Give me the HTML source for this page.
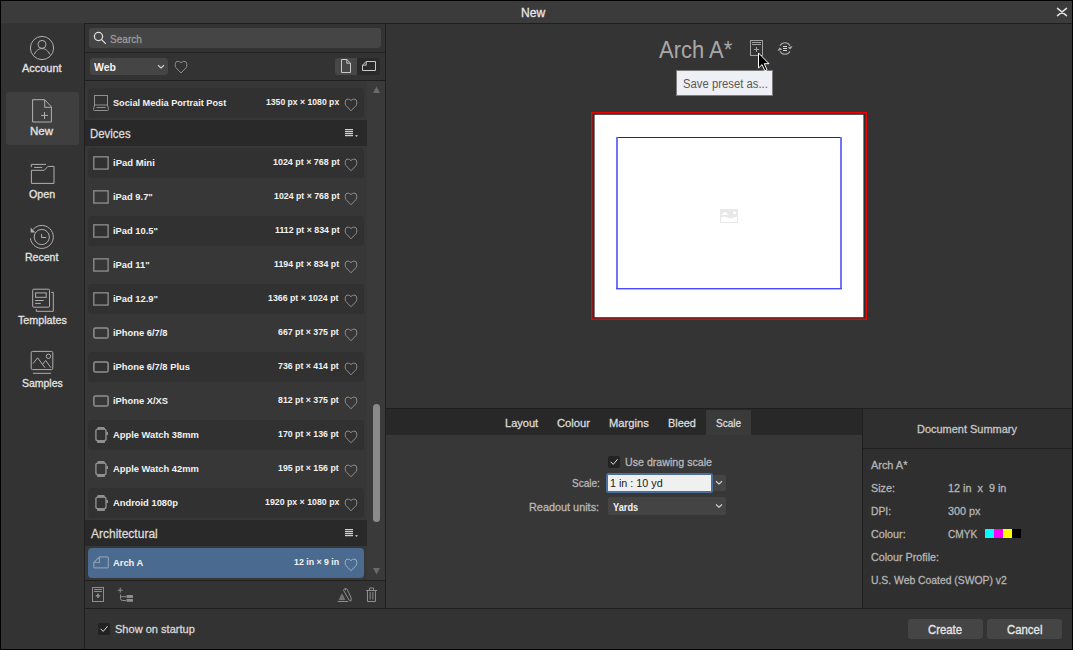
<!DOCTYPE html>
<html><head><meta charset="utf-8"><style>
html,body{margin:0;padding:0;width:1073px;height:650px;overflow:hidden;background:#000}
div{position:absolute}
.t{font-family:"Liberation Sans",sans-serif;white-space:pre;transform-origin:0 0}
svg{position:absolute;left:0;top:0}
</style></head><body>
<div style="left:0px;top:0px;width:1073px;height:650px;background:#000;"></div>
<div style="left:1px;top:1px;width:1071px;height:648px;background:#333333;"></div>
<div style="left:1px;top:1px;width:1071px;height:22px;background:#3b3b3b;"></div>
<div style="left:84px;top:23px;width:988px;height:1px;background:#1f1f1f;"></div>
<div style="left:1px;top:23px;width:83px;height:626px;background:#333333;"></div>
<div style="left:84px;top:24px;width:1px;height:625px;background:#1f1f1f;"></div>
<div style="left:6px;top:92px;width:73px;height:53px;background:#3f3f3f;border-radius:3px"></div>
<div style="left:85px;top:24px;width:300px;height:584px;background:#333333;"></div>
<div style="left:385px;top:24px;width:1px;height:584px;background:#1f1f1f;"></div>
<div style="left:89px;top:28px;width:292px;height:20px;background:#454545;border-radius:3px"></div>
<div style="left:85px;top:52px;width:300px;height:1px;background:#1f1f1f;"></div>
<div style="left:90px;top:58px;width:78px;height:17px;background:#454545;border-radius:3px"></div>
<div style="left:335px;top:58px;width:22px;height:17px;background:#474747;border-radius:3px 0 0 3px"></div>
<div style="left:357px;top:58px;width:23px;height:17px;background:#2a2a2a;border-radius:0 3px 3px 0"></div>
<div style="left:85px;top:80px;width:300px;height:1px;background:#1f1f1f;"></div>
<div style="left:85px;top:81px;width:282px;height:499px;background:#373737;"></div>
<div style="left:367px;top:81px;width:18px;height:499px;background:#3a3a3a;"></div>
<div style="left:373px;top:404px;width:7px;height:118px;background:#8a8a8a;border-radius:3.5px"></div>
<div style="left:85px;top:580px;width:300px;height:1px;background:#1f1f1f;"></div>
<div style="left:85px;top:581px;width:300px;height:27px;background:#333333;"></div>
<div style="left:88px;top:88px;width:276px;height:30px;background:#313131;border-radius:4px"></div>
<div style="left:85px;top:120px;width:282px;height:26px;background:#292929;"></div>
<div style="left:88px;top:148px;width:276px;height:30px;background:#313131;border-radius:4px"></div>
<div style="left:88px;top:216px;width:276px;height:30px;background:#313131;border-radius:4px"></div>
<div style="left:88px;top:284px;width:276px;height:30px;background:#313131;border-radius:4px"></div>
<div style="left:88px;top:352px;width:276px;height:30px;background:#313131;border-radius:4px"></div>
<div style="left:88px;top:420px;width:276px;height:30px;background:#313131;border-radius:4px"></div>
<div style="left:88px;top:488px;width:276px;height:30px;background:#313131;border-radius:4px"></div>
<div style="left:85px;top:520px;width:282px;height:26px;background:#292929;"></div>
<div style="left:88px;top:548px;width:276px;height:30px;background:#4b6a8f;border-radius:4px"></div>
<div style="left:386px;top:24px;width:686px;height:384px;background:#343434;"></div>
<div style="left:386px;top:408px;width:686px;height:1px;background:#1f1f1f;"></div>
<div style="left:676px;top:70px;width:97px;height:26px;background:#7c7c7c;"></div>
<div style="left:677px;top:71px;width:95px;height:24px;background:#eff0f6;"></div>
<div style="left:386px;top:409px;width:476px;height:26px;background:#282828;"></div>
<div style="left:706px;top:410px;width:45px;height:25px;background:#3a3a3a;"></div>
<div style="left:386px;top:435px;width:476px;height:173px;background:#373737;"></div>
<div style="left:862px;top:409px;width:1px;height:199px;background:#1f1f1f;"></div>
<div style="left:608px;top:456px;width:12px;height:12px;background:#222222;border-radius:2px"></div>
<div style="left:606px;top:473px;width:107px;height:20px;background:#4b6f9c;border-radius:2.5px"></div>
<div style="left:608px;top:475px;width:103px;height:16px;background:#f0f0f0;"></div>
<div style="left:713px;top:475px;width:13px;height:16px;background:#444444;border-radius:0 2px 2px 0"></div>
<div style="left:608px;top:497px;width:118px;height:18px;background:#444444;border-radius:2px"></div>
<div style="left:863px;top:409px;width:209px;height:199px;background:#2f2f2f;"></div>
<div style="left:863px;top:448px;width:209px;height:1px;background:#1f1f1f;"></div>
<div style="left:985px;top:529px;width:9px;height:9px;background:#00ffff;"></div>
<div style="left:994px;top:529px;width:9px;height:9px;background:#ff00ff;"></div>
<div style="left:1003px;top:529px;width:9px;height:9px;background:#ffff00;"></div>
<div style="left:1012px;top:529px;width:9px;height:9px;background:#000000;"></div>
<div style="left:85px;top:608px;width:987px;height:1px;background:#1f1f1f;"></div>
<div style="left:85px;top:609px;width:987px;height:40px;background:#333333;"></div>
<div style="left:98px;top:623px;width:12px;height:12px;background:#222222;border-radius:2px"></div>
<div style="left:908px;top:619px;width:75px;height:20px;background:#454545;border-radius:3px"></div>
<div style="left:987px;top:619px;width:75px;height:20px;background:#454545;border-radius:3px"></div>
<svg width="1073" height="650" viewBox="0 0 1073 650">
<path d="M351 110.8 L345.8 105.39999999999999 C345 104.39999999999999 345 101.0 346 99.8 C347 98.8 349.4 98.8 351 100.6 C352.6 98.8 355 98.8 356 99.8 C357 101.0 357 104.39999999999999 356.2 105.39999999999999 Z" fill="none" stroke="#8f8f8f" stroke-width="1"/>
<g fill="none" stroke="#909090"><rect x="94.5" y="95.5" width="13" height="9.5"/><path d="M94.5 105 L93.5 109.5 Q93.5 110.5 94.5 110.5 H107.5 Q108.5 110.5 108.5 109.5 L107.5 105"/><path d="M96.5 107.5 H105.5"/></g>
<g fill="#d0d0d0"><rect x="345" y="129" width="8" height="1.2"/><rect x="345" y="131" width="8" height="1.2"/><rect x="345" y="133" width="8" height="1.2"/><rect x="345" y="135" width="8" height="1.2"/><path d="M355 135.2h3l-1.5 1.8z"/></g>
<path d="M351 170.8 L345.8 165.4 C345 164.4 345 161.0 346 159.8 C347 158.8 349.4 158.8 351 160.60000000000002 C352.6 158.8 355 158.8 356 159.8 C357 161.0 357 164.4 356.2 165.4 Z" fill="none" stroke="#8f8f8f" stroke-width="1"/>
<rect x="93.8" y="156.85" width="14.3" height="12.2" fill="none" stroke="#909090" stroke-width="1.3"/>
<path d="M351 204.8 L345.8 199.4 C345 198.4 345 195.0 346 193.8 C347 192.8 349.4 192.8 351 194.60000000000002 C352.6 192.8 355 192.8 356 193.8 C357 195.0 357 198.4 356.2 199.4 Z" fill="none" stroke="#8f8f8f" stroke-width="1"/>
<rect x="93.8" y="190.85" width="14.3" height="12.2" fill="none" stroke="#909090" stroke-width="1.3"/>
<path d="M351 238.8 L345.8 233.4 C345 232.4 345 229.0 346 227.8 C347 226.8 349.4 226.8 351 228.60000000000002 C352.6 226.8 355 226.8 356 227.8 C357 229.0 357 232.4 356.2 233.4 Z" fill="none" stroke="#8f8f8f" stroke-width="1"/>
<rect x="93.8" y="224.85" width="14.3" height="12.2" fill="none" stroke="#909090" stroke-width="1.3"/>
<path d="M351 272.8 L345.8 267.40000000000003 C345 266.40000000000003 345 263.0 346 261.8 C347 260.8 349.4 260.8 351 262.6 C352.6 260.8 355 260.8 356 261.8 C357 263.0 357 266.40000000000003 356.2 267.40000000000003 Z" fill="none" stroke="#8f8f8f" stroke-width="1"/>
<rect x="93.8" y="258.85" width="14.3" height="12.2" fill="none" stroke="#909090" stroke-width="1.3"/>
<path d="M351 306.8 L345.8 301.40000000000003 C345 300.40000000000003 345 297.0 346 295.8 C347 294.8 349.4 294.8 351 296.6 C352.6 294.8 355 294.8 356 295.8 C357 297.0 357 300.40000000000003 356.2 301.40000000000003 Z" fill="none" stroke="#8f8f8f" stroke-width="1"/>
<rect x="93.8" y="292.85" width="14.3" height="12.2" fill="none" stroke="#909090" stroke-width="1.3"/>
<path d="M351 340.8 L345.8 335.40000000000003 C345 334.40000000000003 345 331.0 346 329.8 C347 328.8 349.4 328.8 351 330.6 C352.6 328.8 355 328.8 356 329.8 C357 331.0 357 334.40000000000003 356.2 335.40000000000003 Z" fill="none" stroke="#8f8f8f" stroke-width="1"/>
<rect x="93.9" y="327.9" width="14.2" height="10.2" rx="1.6" fill="none" stroke="#909090" stroke-width="1.5"/>
<path d="M351 374.8 L345.8 369.40000000000003 C345 368.40000000000003 345 365.0 346 363.8 C347 362.8 349.4 362.8 351 364.6 C352.6 362.8 355 362.8 356 363.8 C357 365.0 357 368.40000000000003 356.2 369.40000000000003 Z" fill="none" stroke="#8f8f8f" stroke-width="1"/>
<rect x="93.9" y="361.9" width="14.2" height="10.2" rx="1.6" fill="none" stroke="#909090" stroke-width="1.5"/>
<path d="M351 408.8 L345.8 403.40000000000003 C345 402.40000000000003 345 399.0 346 397.8 C347 396.8 349.4 396.8 351 398.6 C352.6 396.8 355 396.8 356 397.8 C357 399.0 357 402.40000000000003 356.2 403.40000000000003 Z" fill="none" stroke="#8f8f8f" stroke-width="1"/>
<rect x="93.9" y="395.9" width="14.2" height="10.2" rx="1.6" fill="none" stroke="#909090" stroke-width="1.5"/>
<path d="M351 442.8 L345.8 437.40000000000003 C345 436.40000000000003 345 433.0 346 431.8 C347 430.8 349.4 430.8 351 432.6 C352.6 430.8 355 430.8 356 431.8 C357 433.0 357 436.40000000000003 356.2 437.40000000000003 Z" fill="none" stroke="#8f8f8f" stroke-width="1"/>
<g fill="#909090"><path d="M97.9 427 H104.2 L105.4 429.4 H96.7 Z"/><path d="M96.8 440.5 H105.3 L104.7 443 H97.4 Z"/><rect x="106.2" y="432" width="1.8" height="3"/></g><rect x="95.9" y="429.1" width="10.1" height="11.6" rx="2" fill="none" stroke="#909090" stroke-width="1.4"/>
<path d="M351 476.8 L345.8 471.40000000000003 C345 470.40000000000003 345 467.0 346 465.8 C347 464.8 349.4 464.8 351 466.6 C352.6 464.8 355 464.8 356 465.8 C357 467.0 357 470.40000000000003 356.2 471.40000000000003 Z" fill="none" stroke="#8f8f8f" stroke-width="1"/>
<g fill="#909090"><path d="M97.9 461 H104.2 L105.4 463.4 H96.7 Z"/><path d="M96.8 474.5 H105.3 L104.7 477 H97.4 Z"/><rect x="106.2" y="466" width="1.8" height="3"/></g><rect x="95.9" y="463.1" width="10.1" height="11.6" rx="2" fill="none" stroke="#909090" stroke-width="1.4"/>
<path d="M351 510.8 L345.8 505.40000000000003 C345 504.40000000000003 345 501.0 346 499.8 C347 498.8 349.4 498.8 351 500.6 C352.6 498.8 355 498.8 356 499.8 C357 501.0 357 504.40000000000003 356.2 505.40000000000003 Z" fill="none" stroke="#8f8f8f" stroke-width="1"/>
<g fill="#909090"><path d="M97.9 495 H104.2 L105.4 497.4 H96.7 Z"/><path d="M96.8 508.5 H105.3 L104.7 511 H97.4 Z"/><rect x="106.2" y="500" width="1.8" height="3"/></g><rect x="95.9" y="497.1" width="10.1" height="11.6" rx="2" fill="none" stroke="#909090" stroke-width="1.4"/>
<g fill="#d0d0d0"><rect x="345" y="529" width="8" height="1.2"/><rect x="345" y="531" width="8" height="1.2"/><rect x="345" y="533" width="8" height="1.2"/><rect x="345" y="535" width="8" height="1.2"/><path d="M355 535.2h3l-1.5 1.8z"/></g>
<path d="M351 570.8 L345.8 565.4 C345 564.4 345 561.0 346 559.8 C347 558.8 349.4 558.8 351 560.5999999999999 C352.6 558.8 355 558.8 356 559.8 C357 561.0 357 564.4 356.2 565.4 Z" fill="none" stroke="#9fb2c8" stroke-width="1"/>
<path d="M99.5 556.9 H107.3 Q108.3 556.9 108.3 557.9 V566.9 Q108.3 567.9 107.3 567.9 H94.8 Q93.8 567.9 93.8 566.9 V562.5 Z M93.8 562.5 H99.5 V556.9" fill="none" stroke="#8e9cae" stroke-width="1.2" stroke-linejoin="round"/>
<path d="M373 93 L376.5 86.5 L380 93 Z" fill="#6a6a6a"/><path d="M373 568 L376.5 574.5 L380 568 Z" fill="#6a6a6a"/>
<g fill="none" stroke="#8e8e8e"><rect x="92.5" y="587.5" width="11" height="14"/><path d="M94 589.5H102M94 591.5H102"/></g><path d="M98 593.5V598M95.8 595.75H100.2" stroke="#8e8e8e" stroke-width="1.6"/>
<g fill="none" stroke="#8e8e8e"><path d="M120.2 587.7V592.7M117.7 590.2H122.7"/><path d="M120.5 594.5V598.5Q120.5 600.5 122.5 600.5H126M120.5 596.7H126"/></g><g fill="#8e8e8e"><rect x="126.5" y="595" width="6.5" height="3" rx="0.5"/><rect x="126.5" y="599" width="6.5" height="2.8" rx="0.5"/></g>
<path d="M337.8 601.5H348.2" stroke="#8e8e8e" stroke-width="1"/><path d="M339.3 599.6 L342 594.2 L344.7 599.6 Z" fill="#6e6e6e" stroke="#858585" stroke-width="0.8"/><path d="M343.6 590.4 Q343.9 588.3 346 588.4 Q346.9 588.6 347.2 589.3 L351.2 598 L351 601.2 L349 600 Z" fill="none" stroke="#8e8e8e" stroke-width="1" stroke-linejoin="round"/><circle cx="345.4" cy="589.8" r="0.7" fill="#8e8e8e"/>
<g fill="none" stroke="#8e8e8e"><path d="M366 590.5H377M369.5 590.5V588H373.5V590.5"/><path d="M367.5 591V601.5H375.5V591"/></g><g fill="#7a7a7a"><rect x="369.5" y="592" width="1.3" height="7.5"/><rect x="372.2" y="592" width="1.3" height="7.5"/></g>
<g fill="none" stroke="#b0b0b0" stroke-width="1"><circle cx="42" cy="48" r="11.6"/><circle cx="42" cy="44.4" r="4"/><path d="M34.2 54.5 C36 50.3 39 48.6 42 48.6 C45 48.6 48 50.3 49.8 54.5"/></g>
<g fill="none" stroke="#b0b0b0" stroke-width="1"><path d="M32.6 99.7 H44.6 L51.4 106.8 V122 H32.6 Z"/><path d="M44.7 99.7 V107.3 H51.4"/><path d="M41 115.4 H48 M44.5 112 V119"/></g>
<g fill="none" stroke="#b0b0b0" stroke-width="1"><path d="M31.3 167.2 V164.4 H46"/><path d="M34.1 167.4 H42.2"/><path d="M31.4 170.3 H44.2 L47.9 166.4 H54 V183.4 H31.4 Z"/></g>
<g fill="none" stroke="#b0b0b0" stroke-width="1"><path d="M30.4 238.3 A11.5 11.5 0 1 0 33.2 229.3"/><circle cx="41.75" cy="237" r="7.6"/><path d="M41.6 234 V237.5 H46.2"/></g><path d="M30.6 227.6 L30.6 232.4 L35.4 232.4 Z" fill="#b0b0b0"/>
<g fill="none" stroke="#b0b0b0" stroke-width="1"><rect x="32.7" y="289.2" width="16.8" height="18" rx="1"/><rect x="35.6" y="292.9" width="10.6" height="4.4"/><path d="M35.1 300.5H43.7M35.1 303.4H40.8"/><path d="M51.1 292.4H53.3V311.3H36.3V309.1"/></g>
<g fill="none" stroke="#b0b0b0" stroke-width="1"><rect x="31.2" y="351.4" width="21.6" height="18.2" rx="1.3"/><path d="M33.1 363.5L37.6 357.8L45 367.7M42.7 364.2L45.7 360.5L50.9 367.7"/><circle cx="48.4" cy="356.3" r="2.2"/><path d="M32.9 373.3H51.1"/></g>
<g fill="none" stroke="#c8c8c8" stroke-width="1" stroke-linejoin="round"><path d="M341.5 59.5H346.8L350.5 63.2V72.5H341.5Z M346.8 59.5V63.2H350.5"/><path d="M366.2 61.5H375.5V70.5H362.5V65.2Z M362.5 65.2H366.2V61.5"/></g>
<g fill="none" stroke="#dedede" stroke-width="1.3"><circle cx="98.5" cy="36.5" r="4.1"/><path d="M101.6 39.6L105.4 43.4" stroke-linecap="round"/></g>
<path d="M158 65.3L161 68L164 65.3" fill="none" stroke="#d0d0d0" stroke-width="1.2"/>
<path d="M181 73 L175.8 67.6 C175 66.6 175 63.2 176 62 C177 61 179.4 61 181 62.8 C182.6 61 185 61 186 62 C187 63.2 187 66.6 186.2 67.6 Z" fill="none" stroke="#8f8f8f" stroke-width="1"/>
<g fill="none" stroke="#a0a0a0" stroke-width="1"><rect x="750.5" y="40.5" width="12" height="15"/><path d="M752 42.5H761M752 44.5H761M756.5 47V52M754 49.5H759"/></g>
<g fill="none" stroke="#a8a8a8" stroke-width="1.1"><path d="M780 45.6 A5.8 5.8 0 0 1 790 45.6"/><path d="M790 51.4 A5.8 5.8 0 0 1 780 51.4"/></g><path d="M783 46.5H787M783 48.5H787M783 50.5H787" stroke="#d8d8d8" stroke-width="1.1"/><path d="M787.8 47.6 L792.6 46 L790.4 49.4 Z M782.2 49.4 L777.4 51 L779.6 47.6 Z" fill="#b0b0b0"/>
<rect x="592" y="113" width="274" height="206" fill="#253030"/><rect x="594.6" y="114.8" width="268.8" height="202.4" fill="#fff"/><rect x="591.75" y="112.75" width="274.5" height="206.5" fill="none" stroke="#f00000" stroke-width="1.5"/>
<g shape-rendering="crispEdges"><rect x="616" y="137" width="226" height="1" fill="#1414ff"/><rect x="616" y="137" width="2" height="153" fill="#7272ff"/><rect x="840" y="137" width="2" height="153" fill="#7272ff"/><rect x="616" y="288" width="226" height="1" fill="#4a4aff"/><rect x="616" y="289" width="226" height="1" fill="#b4b4ff"/></g>
<g fill="#e2e2e2"><path d="M720 209H738V223H720Z" fill="#e8e8e8"/></g><g fill="#fff"><path d="M721 215 L725 211.5 L728 214.5 L730 215Z"/><circle cx="734.5" cy="212.8" r="1.5"/><path d="M721 217.2 L725 216.5 L731 218.5 L737 216.5 V222 H721Z"/></g>
<path d="M758.5 53 V68 L762 64.6 L764.8 70.8 L767 69.8 L764.3 63.7 H769 Z" fill="#000" stroke="#fff" stroke-width="1" stroke-linejoin="miter"/>
<path d="M610.6 461.8 L613.2 464.4 L617.6 459.2" fill="none" stroke="#dcdcdc" stroke-width="1"/>
<path d="M716 481.2L719 484L722 481.2" fill="none" stroke="#d0d0d0" stroke-width="1.2"/>
<path d="M716 504.5L719 507.3L722 504.5" fill="none" stroke="#d0d0d0" stroke-width="1.2"/>
<path d="M100.6 628.8 L103.2 631.4 L107.6 626.2" fill="none" stroke="#dcdcdc" stroke-width="1"/>
<path d="M1057.5 8.4 L1066.5 15.6 M1066.5 8.4 L1057.5 15.6" stroke="#e4e4e4" stroke-width="1.5" stroke-linecap="round"/>
</svg>
<div class="t" style="left:520.87px;top:6.00px;font-size:13px;line-height:13px;font-weight:400;color:#e8e8e8;transform:scaleX(0.9280);-webkit-text-stroke-width:0.3px">New</div>
<div class="t" style="left:22.00px;top:63.00px;font-size:11.5px;line-height:11.5px;font-weight:400;color:#e4e4e4;transform:scaleX(0.9524);-webkit-text-stroke-width:0.3px">Account</div>
<div class="t" style="left:30.00px;top:126.00px;font-size:11.5px;line-height:11.5px;font-weight:400;color:#e4e4e4;transform:scaleX(1.0000);-webkit-text-stroke-width:0.3px">New</div>
<div class="t" style="left:29.00px;top:189.00px;font-size:11.5px;line-height:11.5px;font-weight:400;color:#e4e4e4;transform:scaleX(0.9286);-webkit-text-stroke-width:0.3px">Open</div>
<div class="t" style="left:25.08px;top:252.00px;font-size:11.5px;line-height:11.5px;font-weight:400;color:#e4e4e4;transform:scaleX(0.9167);-webkit-text-stroke-width:0.3px">Recent</div>
<div class="t" style="left:17.50px;top:315.00px;font-size:11.5px;line-height:11.5px;font-weight:400;color:#e4e4e4;transform:scaleX(0.9327);-webkit-text-stroke-width:0.3px">Templates</div>
<div class="t" style="left:22.00px;top:378.00px;font-size:11.5px;line-height:11.5px;font-weight:400;color:#e4e4e4;transform:scaleX(0.9111);-webkit-text-stroke-width:0.3px">Samples</div>
<div class="t" style="left:110.00px;top:34.00px;font-size:11px;line-height:11px;font-weight:400;color:#9c9c9c;transform:scaleX(0.9143);-webkit-text-stroke-width:0.3px">Search</div>
<div class="t" style="left:94.00px;top:62.00px;font-size:11px;line-height:11px;font-weight:700;color:#f4f4f4;transform:scaleX(0.9565)">Web</div>
<div class="t" style="left:113.00px;top:98.00px;font-size:9.5px;line-height:9.5px;font-weight:700;color:#f2f2f2;transform:scaleX(0.9658)">Social Media Portrait Post</div>
<div class="t" style="left:265.70px;top:97.00px;font-size:9.5px;line-height:9.5px;font-weight:700;color:#f2f2f2;transform:scaleX(0.9086)">1350 px × 1080 px</div>
<div class="t" style="left:89.62px;top:127.00px;font-size:13px;line-height:13px;font-weight:400;color:#dcdcdc;transform:scaleX(0.8778);-webkit-text-stroke-width:0.3px">Devices</div>
<div class="t" style="left:113.00px;top:158.00px;font-size:9.5px;line-height:9.5px;font-weight:700;color:#f2f2f2;transform:scaleX(1.0024)">iPad Mini</div>
<div class="t" style="left:272.70px;top:157.00px;font-size:9.5px;line-height:9.5px;font-weight:700;color:#f2f2f2;transform:scaleX(0.9380)">1024 pt × 768 pt</div>
<div class="t" style="left:113.00px;top:192.00px;font-size:9.5px;line-height:9.5px;font-weight:700;color:#f2f2f2;transform:scaleX(0.9841)">iPad 9.7&quot;</div>
<div class="t" style="left:273.74px;top:191.00px;font-size:9.5px;line-height:9.5px;font-weight:700;color:#f2f2f2;transform:scaleX(0.9233)">1024 pt × 768 pt</div>
<div class="t" style="left:113.00px;top:226.00px;font-size:9.5px;line-height:9.5px;font-weight:700;color:#f2f2f2;transform:scaleX(0.9841)">iPad 10.5&quot;</div>
<div class="t" style="left:274.67px;top:225.00px;font-size:9.5px;line-height:9.5px;font-weight:700;color:#f2f2f2;transform:scaleX(0.9233)">1112 pt × 834 pt</div>
<div class="t" style="left:113.00px;top:260.00px;font-size:9.5px;line-height:9.5px;font-weight:700;color:#f2f2f2;transform:scaleX(0.9841)">iPad 11&quot;</div>
<div class="t" style="left:273.74px;top:259.00px;font-size:9.5px;line-height:9.5px;font-weight:700;color:#f2f2f2;transform:scaleX(0.9233)">1194 pt × 834 pt</div>
<div class="t" style="left:113.00px;top:294.00px;font-size:9.5px;line-height:9.5px;font-weight:700;color:#f2f2f2;transform:scaleX(0.9841)">iPad 12.9&quot;</div>
<div class="t" style="left:268.20px;top:293.00px;font-size:9.5px;line-height:9.5px;font-weight:700;color:#f2f2f2;transform:scaleX(0.9233)">1366 pt × 1024 pt</div>
<div class="t" style="left:113.00px;top:328.00px;font-size:9.5px;line-height:9.5px;font-weight:700;color:#f2f2f2;transform:scaleX(0.9841)">iPhone 6/7/8</div>
<div class="t" style="left:278.36px;top:327.00px;font-size:9.5px;line-height:9.5px;font-weight:700;color:#f2f2f2;transform:scaleX(0.9233)">667 pt × 375 pt</div>
<div class="t" style="left:113.00px;top:362.00px;font-size:9.5px;line-height:9.5px;font-weight:700;color:#f2f2f2;transform:scaleX(0.9841)">iPhone 6/7/8 Plus</div>
<div class="t" style="left:278.36px;top:361.00px;font-size:9.5px;line-height:9.5px;font-weight:700;color:#f2f2f2;transform:scaleX(0.9233)">736 pt × 414 pt</div>
<div class="t" style="left:113.00px;top:396.00px;font-size:9.5px;line-height:9.5px;font-weight:700;color:#f2f2f2;transform:scaleX(0.9841)">iPhone X/XS</div>
<div class="t" style="left:278.36px;top:395.00px;font-size:9.5px;line-height:9.5px;font-weight:700;color:#f2f2f2;transform:scaleX(0.9233)">812 pt × 375 pt</div>
<div class="t" style="left:113.00px;top:430.00px;font-size:9.5px;line-height:9.5px;font-weight:700;color:#f2f2f2;transform:scaleX(0.9841)">Apple Watch 38mm</div>
<div class="t" style="left:278.36px;top:429.00px;font-size:9.5px;line-height:9.5px;font-weight:700;color:#f2f2f2;transform:scaleX(0.9233)">170 pt × 136 pt</div>
<div class="t" style="left:113.00px;top:464.00px;font-size:9.5px;line-height:9.5px;font-weight:700;color:#f2f2f2;transform:scaleX(0.9841)">Apple Watch 42mm</div>
<div class="t" style="left:278.36px;top:463.00px;font-size:9.5px;line-height:9.5px;font-weight:700;color:#f2f2f2;transform:scaleX(0.9233)">195 pt × 156 pt</div>
<div class="t" style="left:113.00px;top:498.00px;font-size:9.5px;line-height:9.5px;font-weight:700;color:#f2f2f2;transform:scaleX(0.9841)">Android 1080p</div>
<div class="t" style="left:264.51px;top:497.00px;font-size:9.5px;line-height:9.5px;font-weight:700;color:#f2f2f2;transform:scaleX(0.9233)">1920 px × 1080 px</div>
<div class="t" style="left:90.50px;top:527.00px;font-size:13px;line-height:13px;font-weight:400;color:#dcdcdc;transform:scaleX(0.9236);-webkit-text-stroke-width:0.3px">Architectural</div>
<div class="t" style="left:113.00px;top:558.00px;font-size:9.5px;line-height:9.5px;font-weight:700;color:#f2f2f2;transform:scaleX(0.9841)">Arch A</div>
<div class="t" style="left:294.06px;top:557.00px;font-size:9.5px;line-height:9.5px;font-weight:700;color:#f2f2f2;transform:scaleX(0.9233)">12 in × 9 in</div>
<div class="t" style="left:659.00px;top:39.00px;font-size:23px;line-height:23px;font-weight:400;color:#a8a8a8;transform:scaleX(0.9545)">Arch A*</div>
<div class="t" style="left:682.90px;top:78.00px;font-size:12.5px;line-height:12.5px;font-weight:400;color:#575757;transform:scaleX(0.9043)">Save preset as...</div>
<div class="t" style="left:505.44px;top:418.00px;font-size:11.5px;line-height:11.5px;font-weight:400;color:#dcdcdc;transform:scaleX(0.9588);-webkit-text-stroke-width:0.3px">Layout</div>
<div class="t" style="left:557.40px;top:418.00px;font-size:11.5px;line-height:11.5px;font-weight:400;color:#dcdcdc;transform:scaleX(0.9765);-webkit-text-stroke-width:0.3px">Colour</div>
<div class="t" style="left:609.32px;top:418.00px;font-size:11.5px;line-height:11.5px;font-weight:400;color:#dcdcdc;transform:scaleX(0.9750);-webkit-text-stroke-width:0.3px">Margins</div>
<div class="t" style="left:668.25px;top:418.00px;font-size:11.5px;line-height:11.5px;font-weight:400;color:#dcdcdc;transform:scaleX(0.9500);-webkit-text-stroke-width:0.3px">Bleed</div>
<div class="t" style="left:715.70px;top:418.00px;font-size:11.5px;line-height:11.5px;font-weight:400;color:#dcdcdc;transform:scaleX(0.8759);-webkit-text-stroke-width:0.3px">Scale</div>
<div class="t" style="left:624.67px;top:457.00px;font-size:11.5px;line-height:11.5px;font-weight:400;color:#b8b8b8;transform:scaleX(0.9258);-webkit-text-stroke-width:0.3px">Use drawing scale</div>
<div class="t" style="left:572.00px;top:478.00px;font-size:11.5px;line-height:11.5px;font-weight:400;color:#b8b8b8;transform:scaleX(0.8710);-webkit-text-stroke-width:0.3px">Scale:</div>
<div class="t" style="left:609.56px;top:478.00px;font-size:11.5px;line-height:11.5px;font-weight:400;color:#202020;transform:scaleX(0.9364)">1 in : 10 yd</div>
<div class="t" style="left:529.05px;top:502.00px;font-size:11.5px;line-height:11.5px;font-weight:400;color:#b8b8b8;transform:scaleX(0.9452);-webkit-text-stroke-width:0.3px">Readout units:</div>
<div class="t" style="left:612.50px;top:502.00px;font-size:10.5px;line-height:10.5px;font-weight:700;color:#f2f2f2;transform:scaleX(0.8793)">Yards</div>
<div class="t" style="left:917.45px;top:424.00px;font-size:11.5px;line-height:11.5px;font-weight:400;color:#c8c8c8;transform:scaleX(0.9529);-webkit-text-stroke-width:0.3px">Document Summary</div>
<div class="t" style="left:871.00px;top:460.00px;font-size:11.5px;line-height:11.5px;font-weight:400;color:#b6b6b6;transform:scaleX(0.9487);-webkit-text-stroke-width:0.3px">Arch A*</div>
<div class="t" style="left:871.00px;top:483.00px;font-size:11.5px;line-height:11.5px;font-weight:400;color:#b6b6b6;transform:scaleX(0.9337);-webkit-text-stroke-width:0.3px">Size:</div>
<div class="t" style="left:948.06px;top:483.00px;font-size:11.5px;line-height:11.5px;font-weight:400;color:#b6b6b6;transform:scaleX(0.9410);-webkit-text-stroke-width:0.3px">12 in  x  9 in</div>
<div class="t" style="left:871.10px;top:506.00px;font-size:11.5px;line-height:11.5px;font-weight:400;color:#b6b6b6;transform:scaleX(0.8952);-webkit-text-stroke-width:0.3px">DPI:</div>
<div class="t" style="left:948.00px;top:506.00px;font-size:11.5px;line-height:11.5px;font-weight:400;color:#b6b6b6;transform:scaleX(0.9412);-webkit-text-stroke-width:0.3px">300 px</div>
<div class="t" style="left:871.00px;top:529.00px;font-size:11.5px;line-height:11.5px;font-weight:400;color:#b6b6b6;transform:scaleX(0.9337);-webkit-text-stroke-width:0.3px">Colour:</div>
<div class="t" style="left:948.00px;top:529.00px;font-size:11.5px;line-height:11.5px;font-weight:400;color:#b6b6b6;transform:scaleX(0.8788);-webkit-text-stroke-width:0.3px">CMYK</div>
<div class="t" style="left:871.00px;top:552.00px;font-size:11.5px;line-height:11.5px;font-weight:400;color:#b6b6b6;transform:scaleX(0.9337);-webkit-text-stroke-width:0.3px">Colour Profile:</div>
<div class="t" style="left:871.10px;top:575.00px;font-size:11.5px;line-height:11.5px;font-weight:400;color:#b6b6b6;transform:scaleX(0.9013);-webkit-text-stroke-width:0.3px">U.S. Web Coated (SWOP) v2</div>
<div class="t" style="left:114.60px;top:624.00px;font-size:11.5px;line-height:11.5px;font-weight:400;color:#d8d8d8;transform:scaleX(0.9602);-webkit-text-stroke-width:0.3px">Show on startup</div>
<div class="t" style="left:928.00px;top:623.00px;font-size:13px;line-height:13px;font-weight:400;color:#e8e8e8;transform:scaleX(0.8718);-webkit-text-stroke-width:0.3px">Create</div>
<div class="t" style="left:1007.00px;top:623.00px;font-size:13px;line-height:13px;font-weight:400;color:#e8e8e8;transform:scaleX(0.8750);-webkit-text-stroke-width:0.3px">Cancel</div>
</body></html>
